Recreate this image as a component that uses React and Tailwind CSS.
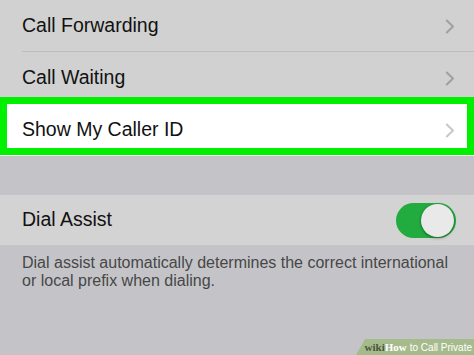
const rows = ['Call Forwarding', 'Call Waiting']

function Chevron({ color }) {
  return (
    <svg width="10" height="15" viewBox="0 0 10 15" className="mr-[19px]" fill="none" stroke={color} strokeWidth="2" strokeLinecap="round" strokeLinejoin="round">
      <path d="M1.8 1.5 L8 7.5 L1.8 13.5" />
    </svg>
  )
}

function Row({ label, last }) {
  return (
    <div className="relative h-[52px] flex items-center pl-[22px]">
      <span className="flex-1 text-[19.5px] text-[#111]">{label}</span>
      <Chevron color="#a0a0a0" />
      {!last && <div className="absolute left-[22px] right-0 bottom-0 h-px bg-[#bcbcbc]" />}
    </div>
  )
}

export default function App() {
  return (
    <div className="w-[474px] h-[355px] overflow-hidden bg-[#c4c4c8] relative" style={{ fontFamily: '"Liberation Sans", Arial, sans-serif' }}>
      {/* liste */}
      <div className="bg-[#d1d1d1]">
        {rows.map((r, i) => <Row key={r} label={r} last={i === rows.length - 1} />)}
        <div className="relative h-[52px] flex items-center pl-[22px] bg-white">
          <span className="flex-1 text-[19.5px] text-[#111]">Show My Caller ID</span>
          <Chevron color="#c8c8c8" />
          {/* surlignage vert */}
          <div className="absolute -top-[7px] bottom-[1px] inset-x-0 border-[7px] border-[#00f000]" />
        </div>
      </div>

      <div className="h-[39px]" />

      {/* Dial Assist */}
      <div className="h-[50px] bg-[#d3d3d3] flex items-center pl-[22px] pr-[18px]">
        <span className="flex-1 text-[19.5px] text-[#111]">Dial Assist</span>
        <div className="w-[60px] h-[35px] rounded-full bg-[#22ab3f] relative">
          <div className="absolute right-[2px] top-[1px] w-[33px] h-[33px] rounded-full bg-[#e9e9e9] shadow-[0_1px_3px_rgba(0,0,0,0.45)]" />
        </div>
      </div>

      <p className="pl-[22px] pr-4 pt-[9px] text-[16px] leading-[18px] text-[#474747]">
        Dial assist automatically determines the correct international or local prefix when dialing.
      </p>

      {/* watermark */}
      <div className="absolute right-0 bottom-0 h-[16px] w-[118px] bg-[#a6bb8c] flex items-center justify-end pr-[2px] whitespace-nowrap [clip-path:polygon(9px_0,100%_0,100%_100%,0_100%)]">
        <span className="font-bold text-[11px] text-[#46563a]" style={{ fontFamily: '"Liberation Serif", serif' }}>wiki</span>
        <span className="font-bold text-[11px] text-white" style={{ fontFamily: '"Liberation Serif", serif' }}>How</span>
        <span className="text-white ml-[3px] text-[10px]">to Call Private</span>
      </div>
    </div>
  )
}
